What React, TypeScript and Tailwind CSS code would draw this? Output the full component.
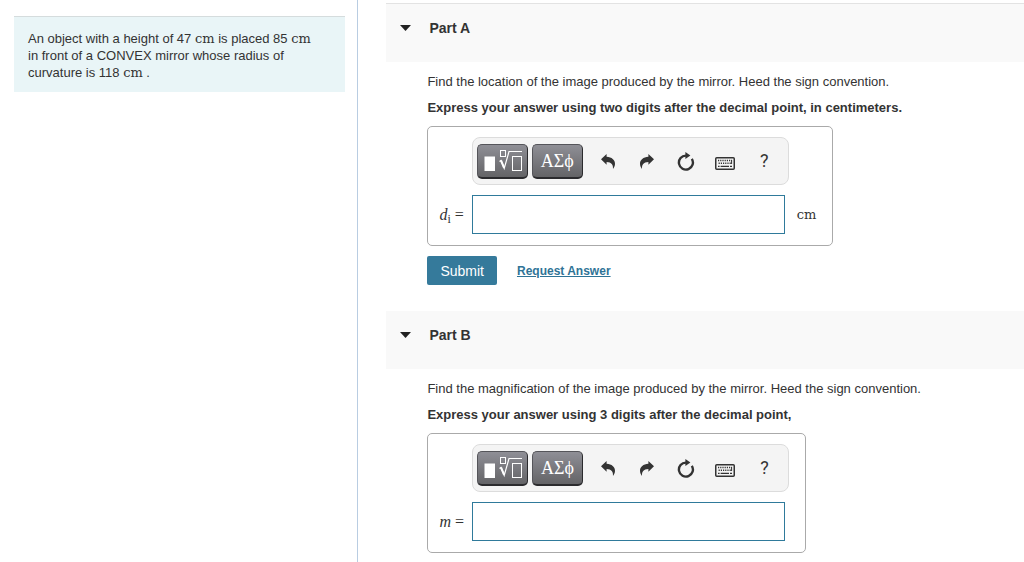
import type { ReactNode } from "react";

function UndoIcon() {
  return (
    <svg className="h-[15px] w-[14px]" viewBox="0 0 14 15" fill="currentColor" aria-hidden="true">
      <path d="M0 5.3 L5.6 0 V2.8 C10.8 3 14 6 14 9.8 C14 11.8 13.2 13.4 12 15 C12.3 10.6 10.6 8.2 5.6 8 V10.8 Z" />
    </svg>
  );
}

function RedoIcon() {
  return (
    <svg className="h-[15px] w-[14px]" viewBox="0 0 14 15" fill="currentColor" aria-hidden="true">
      <path d="M14 5.3 L8.4 0 V2.8 C3.2 3 0 6 0 9.8 C0 11.8 0.8 13.4 2 15 C1.7 10.6 3.4 8.2 8.4 8 V10.8 Z" />
    </svg>
  );
}

function ResetIcon() {
  return (
    <svg className="h-[19px] w-[18px]" viewBox="0 0 18 19" aria-hidden="true">
      <path d="M9 3.6 A7 7 0 1 0 14.8 6.8" fill="none" stroke="currentColor" strokeWidth="2.4" />
      <path d="M8.4 0 L13.4 3.4 L8.4 7 Z" fill="currentColor" />
    </svg>
  );
}

function KeyboardIcon() {
  return (
    <svg className="h-[13px] w-[20px]" viewBox="0 0 20 13" fill="none" stroke="currentColor" aria-hidden="true">
      <rect x="0.75" y="0.75" width="18.5" height="11.5" rx="1" strokeWidth="1.5" />
      <path d="M3 3.5 H17" strokeWidth="1.4" strokeDasharray="1.2 1" />
      <path d="M3.6 6.2 H17" strokeWidth="1.6" strokeDasharray="1.2 1" />
      <path d="M16.6 3 V7" strokeWidth="1" />
      <path d="M3 9.4 H4.6 M5.6 9.4 H14 M15 9.4 H17" strokeWidth="1.4" />
    </svg>
  );
}

function TemplatesIcon() {
  return (
    <svg className="h-[23px] w-[39px]" viewBox="0 0 39 23" fill="none" stroke="white" aria-hidden="true">
      <rect x="0.5" y="7.5" width="10.5" height="14.5" fill="white" stroke="none" />
      <rect x="16.5" y="1.5" width="5" height="6" />
      <path d="M15.5 12.5 L17 11.5 L20.2 19.5 L25 2.5 H38" strokeWidth="1.2" />
      <path d="M17 11.5 L20 18.5" strokeWidth="2" />
      <rect x="28.5" y="7.5" width="9" height="14" />
    </svg>
  );
}

function Unit({ children }: { children: ReactNode }) {
  return <span className="font-['DejaVu_Serif',serif] text-[13px] leading-4">{children}</span>;
}

const paletteButton =
  "flex h-[35px] w-[51px] items-center justify-center rounded-[5px] border border-[#55555a] border-r-[#2b2b2e] border-b-2 border-b-[#2b2b2e] bg-linear-to-b from-[#8f8f96] to-[#646467] text-white";

const iconButton = "flex h-[35px] w-[39px] items-center justify-center text-[#333]";

function Toolbar() {
  return (
    <div
      role="toolbar"
      aria-label="Equation editor"
      className="flex h-12 w-[317px] items-center rounded-lg border border-[#dcdcdc] bg-[#f4f4f4] pl-1"
    >
      <button type="button" aria-label="Templates" className={`${paletteButton} pl-0.5`}>
        <TemplatesIcon />
      </button>
      <button
        type="button"
        aria-label="Symbols"
        className={`${paletteButton} ml-1 mr-1.5 font-['Liberation_Serif',serif] text-lg`}
      >
        ΑΣϕ
      </button>
      <button type="button" aria-label="Undo" className={iconButton}>
        <UndoIcon />
      </button>
      <button type="button" aria-label="Redo" className={iconButton}>
        <RedoIcon />
      </button>
      <button type="button" aria-label="Reset" className={iconButton}>
        <ResetIcon />
      </button>
      <button type="button" aria-label="Keyboard shortcuts" className={`${iconButton} pt-1`}>
        <KeyboardIcon />
      </button>
      <button type="button" aria-label="Help" className={`${iconButton} font-[Roboto,sans-serif] text-lg`}>
        ?
      </button>
    </div>
  );
}

type AnswerBoxProps = {
  id: string;
  label: ReactNode;
  unit?: string;
};

function AnswerBox({ id, label, unit }: AnswerBoxProps) {
  return (
    <div className="grid w-fit grid-cols-[auto_auto_auto] items-center gap-y-2.5 rounded-[5px] border border-[#aaa] pt-2.5 pr-4 pb-[11px] pl-[11px]">
      <div className="col-start-2">
        <Toolbar />
      </div>
      <label htmlFor={id} className="col-start-1 pr-2 whitespace-nowrap font-['Liberation_Serif',serif] text-base">
        {label} =
      </label>
      <input
        id={id}
        type="text"
        className="h-[39px] w-[313px] border border-[#2f7a9b] bg-white px-2 outline-none"
      />
      {unit && (
        <div className="pl-2">
          <Unit>{unit}</Unit>
        </div>
      )}
    </div>
  );
}

type PartProps = {
  title: string;
  question: string;
  instruction: string;
  children: ReactNode;
};

function Part({ title, question, instruction, children }: PartProps) {
  return (
    <section>
      <h2 className="h-[58px] bg-[#f9f9f9] pt-3.5">
        <button type="button" aria-expanded="true" className="flex items-center pl-3.5 text-sm font-bold">
          <svg className="mr-[18px] h-[6px] w-[11px]" viewBox="0 0 11 6" fill="#222" aria-hidden="true">
            <path d="M0 0 H11 L5.5 6 Z" />
          </svg>
          {title}
        </button>
      </h2>
      <div className="pt-2.5 pl-[41px]">
        <p className="leading-5">{question}</p>
        <p className="mt-1.5 mb-2 leading-5 font-bold">{instruction}</p>
        {children}
      </div>
    </section>
  );
}

export default function App() {
  return (
    <div className="flex min-h-screen bg-white font-['Liberation_Sans',Arial,sans-serif] text-[13px] text-[#333]">
      <aside className="w-[35%] shrink-0 border-r border-[#b9cde2] py-4 pr-3 pl-3.5">
        <p className="border-t border-[#d5dcdd] bg-[#e9f5f7] pt-[13px] pr-6 pb-[11px] pl-3.5 leading-[17px]">
          An object with a height of 47 <Unit>cm</Unit> is placed 85 <Unit>cm</Unit> in front of a CONVEX mirror
          whose radius of curvature is 118 <Unit>cm</Unit> .
        </p>
      </aside>

      <main className="min-w-0 flex-1 pt-[3px] pl-7">
        <div className="border-t border-[#e3e3e3]">
          <Part
            title="Part A"
            question="Find the location of the image produced by the mirror. Heed the sign convention."
            instruction="Express your answer using two digits after the decimal point, in centimeters."
          >
            <AnswerBox
              id="image-distance"
              label={
                <>
                  <i>d</i>
                  <sub className="text-xs">i</sub>
                </>
              }
              unit="cm"
            />
            <div className="mt-2.5 mb-[26px] flex items-center gap-5">
              <button type="submit" className="h-[29px] rounded-xs bg-[#357a9b] px-[13px] text-sm text-white">
                Submit
              </button>
              <a href="#request-answer" className="text-xs font-bold text-[#2f7396] underline">
                Request Answer
              </a>
            </div>
          </Part>
        </div>

        <Part
          title="Part B"
          question="Find the magnification of the image produced by the mirror. Heed the sign convention."
          instruction="Express your answer using 3 digits after the decimal point,"
        >
          <AnswerBox id="magnification" label={<i>m</i>} />
        </Part>
      </main>
    </div>
  );
}
